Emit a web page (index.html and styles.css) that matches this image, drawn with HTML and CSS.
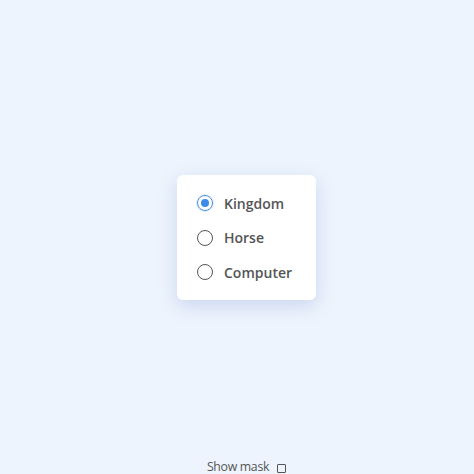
FILE: index.html
```html
<!DOCTYPE html>
<html>
<head>
<meta charset="utf-8">
<link rel="stylesheet" href="styles.css">
</head>
<body>
<div class="page">
  <div class="stage">
    <div class="card">
      <label class="option">
        <span class="radio checked"><span class="dot"></span></span>
        <span class="label">Kingdom</span>
      </label>
      <label class="option">
        <span class="radio"></span>
        <span class="label">Horse</span>
      </label>
      <label class="option">
        <span class="radio"></span>
        <span class="label">Computer</span>
      </label>
    </div>
  </div>
  <div class="footer">
    <span class="footer-text">Show mask</span>
    <span class="checkbox"></span>
  </div>
</div>
</body>
</html>
```
FILE: styles.css
```css
html, body {
  margin: 0;
  padding: 0;
  height: 100%;
}
body {
  background: #edf4fd;
  font-family: "Open Sans", "Noto Sans", sans-serif;
  color: #4d4d4d;
}
.page {
  height: 474px;
  display: flex;
  flex-direction: column;
  padding-left: 19px;
  box-sizing: border-box;
}
.stage {
  flex: 1;
  display: flex;
  align-items: center;
  justify-content: center;
  padding-top: 17px;
}
.card {
  width: 139px;
  height: 125px;
  box-sizing: border-box;
  background: #ffffff;
  border-radius: 6px;
  box-shadow: 0 6px 18px rgba(110, 130, 200, 0.26);
  padding: 18px 0 0 20px;
  display: flex;
  flex-direction: column;
  gap: 14.5px;
}
.option {
  display: flex;
  align-items: center;
  height: 20px;
  gap: 11px;
}
.radio {
  width: 14px;
  height: 14px;
  border: 1.5px solid #555;
  border-radius: 50%;
  display: flex;
  align-items: center;
  justify-content: center;
  flex: none;
}
.radio.checked {
  border-color: #4a90e2;
  box-shadow: 0 0 0 1px rgba(74, 144, 226, 0.2);
}
.dot {
  width: 8px;
  height: 8px;
  border-radius: 50%;
  background: #3d8be6;
}
.label {
  font-size: 14px;
  font-weight: 600;
  color: #555;
}
.footer {
  height: 16px;
  display: flex;
  justify-content: center;
  align-items: center;
  gap: 8px;
}
.footer-text {
  font-size: 12.3px;
  letter-spacing: -0.3px;
  color: #555;
}
.checkbox {
  width: 7px;
  height: 7px;
  border: 1px solid #555;
  border-radius: 1px;
  margin-top: 4px;
}
```
